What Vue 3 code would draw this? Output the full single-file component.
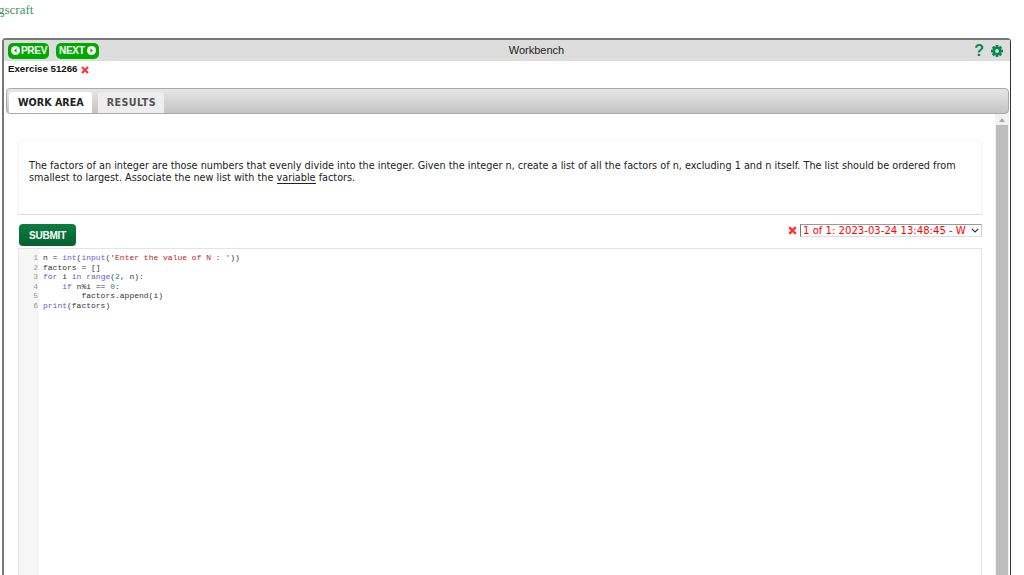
<script setup>
const lines = [
  [{t:'n = '},{t:'int',c:'kw'},{t:'('},{t:'input',c:'kw'},{t:'('},{t:"'Enter the value of N : '",c:'str'},{t:'))'}],
  [{t:'factors = []'}],
  [{t:'for',c:'kw'},{t:' i '},{t:'in',c:'kw'},{t:' '},{t:'range',c:'kw'},{t:'('},{t:'2',c:'num'},{t:', n):'}],
  [{t:'    '},{t:'if',c:'kw'},{t:' n%i == '},{t:'0',c:'num'},{t:':'}],
  [{t:'        factors.append(i)'}],
  [{t:'print',c:'kw'},{t:'(factors)'}],
]
</script>

<template>
  <div class="page">
    <div class="logo">gscraft</div>
    <section class="window">
      <header class="titlebar">
        <div class="navs">
          <button class="nav">
            <svg width="9" height="9" viewBox="0 0 10 10"><circle cx="5" cy="5" r="5" fill="#fff"/><path d="M6.2 2.4 3.4 5l2.8 2.6z" fill="#0a0"/></svg>
            <span>PREV</span>
          </button>
          <button class="nav next">
            <span>NEXT</span>
            <svg width="9" height="9" viewBox="0 0 10 10"><circle cx="5" cy="5" r="5" fill="#fff"/><path d="M3.8 2.4 6.6 5 3.8 7.6z" fill="#0a0"/></svg>
          </button>
        </div>
        <div class="title">Workbench</div>
        <div class="tools">
          <span class="help">?</span>
          <svg width="12" height="12" viewBox="0 0 12 12">
            <g fill="#0a8a4f">
              <circle cx="6" cy="6" r="4.4"/>
              <rect x="4.6" y="0" width="2.8" height="12" rx=".4"/>
              <rect x="0" y="4.6" width="12" height="2.8" rx=".4"/>
              <rect x="4.6" y="0" width="2.8" height="12" rx=".4" transform="rotate(45 6 6)"/>
              <rect x="0" y="4.6" width="12" height="2.8" rx=".4" transform="rotate(45 6 6)"/>
            </g>
            <circle cx="6" cy="6" r="1.9" fill="#ddd"/>
          </svg>
        </div>
      </header>
      <div class="exercise">
        <span>Exercise 51266</span>
        <svg class="x" width="8" height="8" viewBox="0 0 8 8"><path d="M1 1 7 7M7 1 1 7" stroke="#f33" stroke-width="2.2"/></svg>
      </div>
      <div class="tabbar">
        <div class="tab active">WORK AREA</div>
        <div class="tab results">RESULTS</div>
      </div>
      <div class="content">
        <div class="main">
          <div class="question">
            <p>The factors of an integer are those numbers that evenly divide into the integer. Given the integer n, create a list of all the factors of n, excluding 1 and n itself. The list should be ordered from smallest to largest. Associate the new list with the <span class="term">variable</span> factors.</p>
          </div>
          <div class="actions">
            <button class="submit">SUBMIT</button>
            <div class="attempts">
              <svg width="9" height="9" viewBox="0 0 9 9"><path d="M1.2 1.2 7.8 7.8M7.8 1.2 1.2 7.8" stroke="#f33" stroke-width="2.4"/></svg>
              <div class="select">
                <span>1 of 1: 2023-03-24 13:48:45 - W</span>
                <svg width="8" height="5" viewBox="0 0 8 5"><path d="M.8.8 4 4 7.2.8" fill="none" stroke="#333" stroke-width="1.2"/></svg>
              </div>
            </div>
          </div>
          <div class="editor">
            <div class="gutter"><div v-for="n in 6" :key="n">{{ n }}</div></div>
            <div class="code">
              <div v-for="(line, i) in lines" :key="i" class="line"><span v-for="(s, j) in line" :key="j" :class="s.c">{{ s.t }}</span></div>
            </div>
          </div>
        </div>
        <div class="scrollbar">
          <div class="arrow"></div>
          <div class="thumb"></div>
        </div>
      </div>
    </section>
  </div>
</template>

<style>
html, body { margin: 0; height: 100%; overflow: hidden; background: #fff; }
</style>

<style scoped>
.page { height: 575px; overflow: hidden; font-family: "Liberation Sans", Arial, sans-serif; background: #fff; }
.logo { height: 38px; font: 13px/19px "Liberation Serif", serif; color: #3f9264; margin-left: -2px; }
.window {
  margin: 0 13px 0 2px; height: 600px; box-sizing: border-box;
  border: 2px solid #777; border-right: 1px solid #333; border-bottom: 0; border-radius: 4px 4px 0 0;
  display: flex; flex-direction: column;
}
.titlebar { height: 21px; flex: none; background: #ddd; display: grid; grid-template-columns: 1fr auto 1fr; align-items: center; padding: 0 7px 0 4px; }
.navs { display: flex; gap: 7px; }
.nav {
  height: 16px; border: 0; border-radius: 5px; background: #0a0; color: #fff; padding: 0 2px 0 3px;
  display: flex; align-items: center; gap: 1px; font: bold 10px "Liberation Sans", sans-serif; letter-spacing: -.3px;
}
.nav.next { gap: 2px; padding: 0 3px 0 3px; }
.title { font-size: 11px; color: #222; padding: 0 0 1px 62px; }
.tools { display: flex; justify-content: flex-end; align-items: center; gap: 7px; }
.help { font: bold 16px/16px "Liberation Sans", sans-serif; color: #0a8a4f; }
.exercise { height: 27px; flex: none; box-sizing: border-box; padding: 2px 0 0 4px; font-size: 9.7px; font-weight: bold; color: #111; display: flex; align-items: flex-start; gap: 3px; line-height: 12px; }
.exercise .x { margin-top: 3px; }
.tabbar {
  flex: none; height: 26px; box-sizing: border-box; margin: 0 1px 0 2px; padding: 3px 0 0 2px;
  border: 1px solid #aaa; border-radius: 4px; background: linear-gradient(#e6e6e6, #c4c4c4);
  display: flex; gap: 6px;
}
.tab {
  height: 21px; padding: 0 8px 0 9px; display: flex; align-items: center; background: #eee; color: #555;
  font: bold 9.6px "DejaVu Sans", Verdana, sans-serif; border-radius: 3px 3px 0 0;
}
.tab.active { background: #fff; color: #222; }
.tab.results { letter-spacing: .4px; }
.content { flex: 1; display: flex; min-height: 0; padding-left: 14px; padding-right: 1px; }
.main { width: 964px; flex: none; }
.question {
  margin-top: 26px; height: 75px; box-sizing: border-box; padding: 19px 10px 0 10px;
  border: 1px solid #f2f2f2; border-bottom: 1px solid #ddd; border-top-color: #f6f6f6;
}
.question p { margin: 0; font: 9.7px/12px "DejaVu Sans", Verdana, sans-serif; color: #222; }
.term { border-bottom: 1px solid #222; line-height: 10px; display: inline-block; }
.actions { display: flex; justify-content: space-between; align-items: flex-start; margin-top: 9px; height: 24px; }
.submit {
  width: 57px; height: 22px; margin-left: 1px; border: 0; border-radius: 4px; background: linear-gradient(#0b7d43, #05602f);
  color: #fff; font: bold 10px "Liberation Sans", sans-serif; letter-spacing: -.2px;
}
.attempts { display: flex; align-items: center; gap: 3px; }
.select {
  width: 182px; height: 13px; box-sizing: border-box; border: 1px solid #777; border-top-color: #999; border-right-color: #ccc; border-bottom-color: #ddd;
  display: flex; align-items: center; justify-content: space-between; padding: 0 2px;
  font: 10.1px/11px "DejaVu Sans", Verdana, sans-serif; color: #f00; white-space: nowrap;
}
.editor { height: 400px; display: flex; border: 1px solid #e4e4e4; border-bottom: 0; font: 8px/9.6px "Liberation Mono", monospace; color: #333; }
.gutter { width: 20px; box-sizing: border-box; background: #f6f6f6; padding: 4px 1px 0 0; text-align: right; color: #999; }
.code { padding: 4px 0 0 4px; white-space: pre; }
.line { height: 9.6px; }
.kw { color: #6a5acd; }
.str { color: #b22; }
.num { color: #287; }
.scrollbar { width: 14px; margin-left: 13px; background: #f2f2f2; flex: none; }
.arrow { height: 0; width: 0; margin: 4px auto 3px; border: 3px solid transparent; border-top: 0; border-bottom: 4px solid #aaa; }
.thumb { margin: 0 1px; height: 500px; background: #bdbdbd; }
</style>
